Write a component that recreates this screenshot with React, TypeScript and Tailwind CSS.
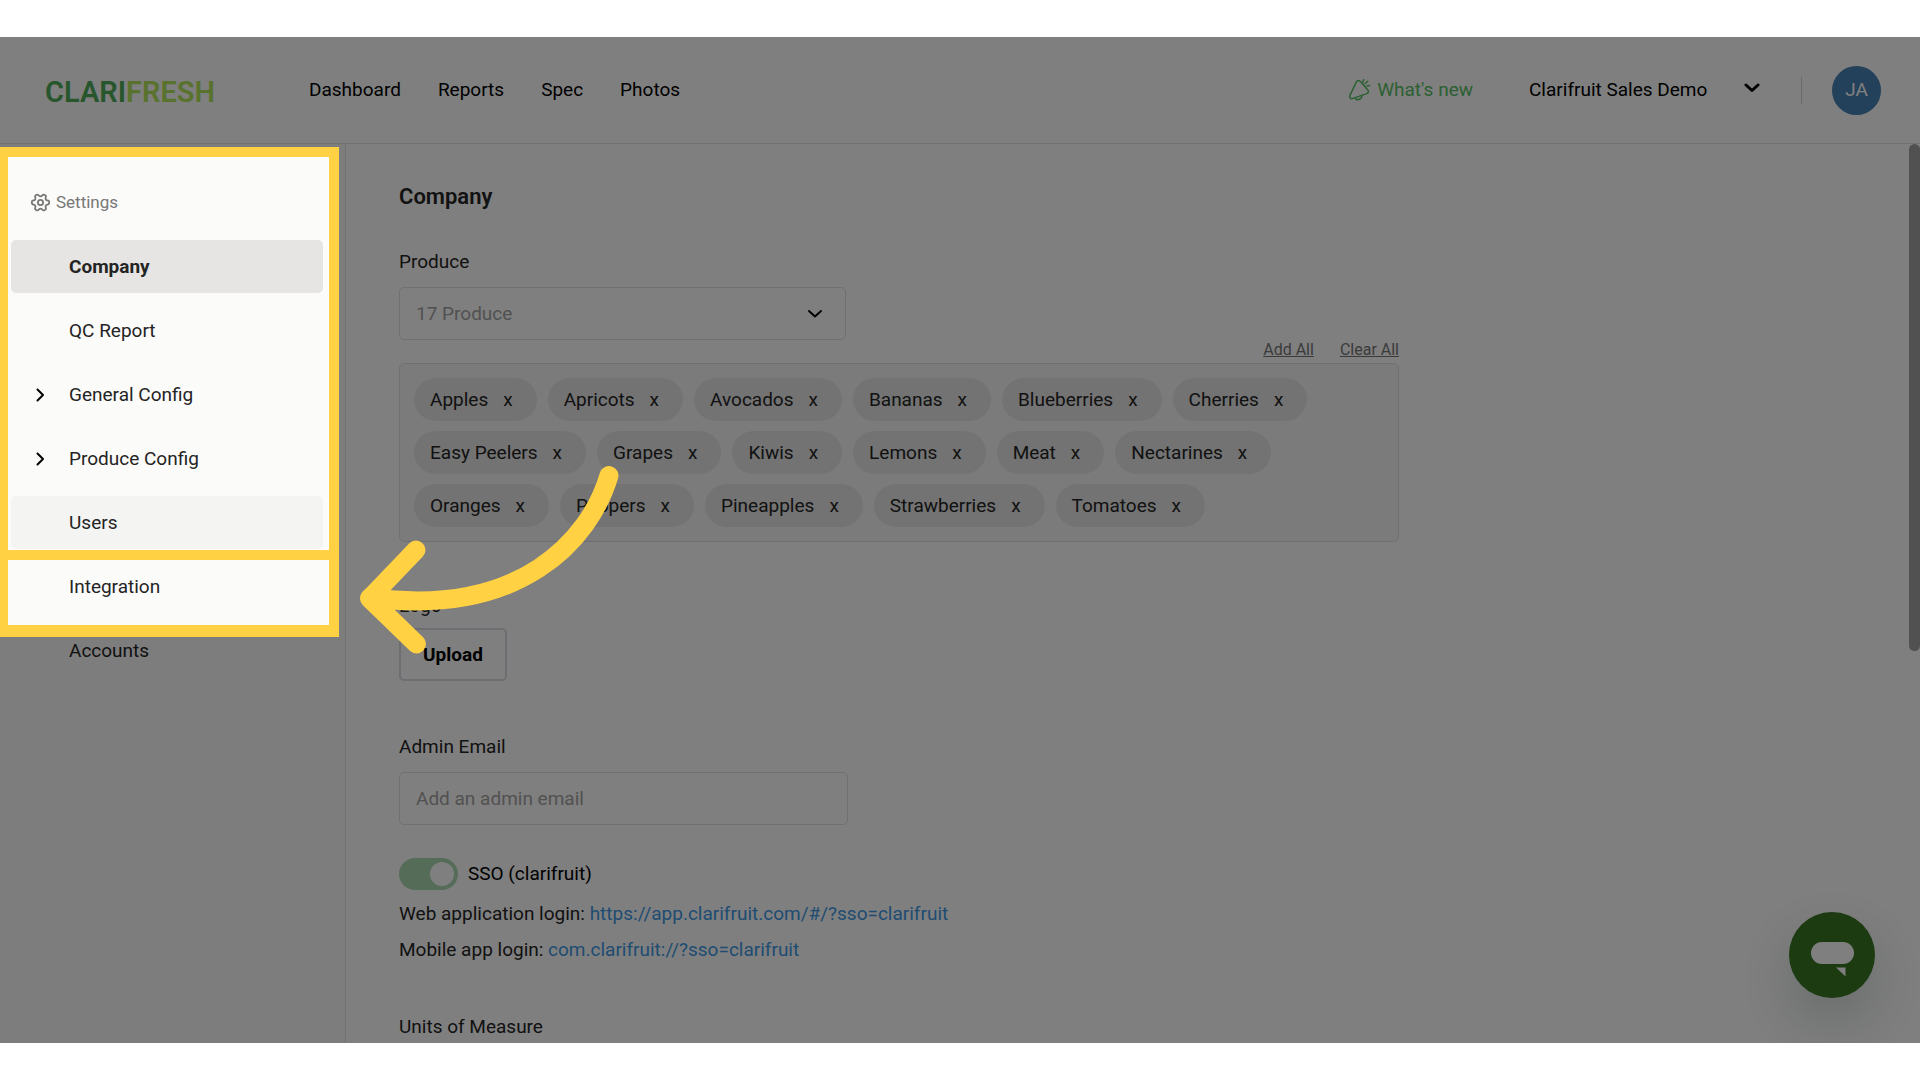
import { useState } from "react"
import { Settings } from "lucide-react"

const navLinks = ["Dashboard", "Reports", "Spec", "Photos"]

const menuItems = [
    { label: "Company", active: true },
    { label: "QC Report" },
    { label: "General Config", expandable: true },
    { label: "Produce Config", expandable: true },
    { label: "Users", hovered: true },
    { label: "Integration" },
    { label: "Accounts" },
]

const allProduce = [
    "Apples", "Apricots", "Avocados", "Bananas", "Blueberries", "Cherries",
    "Easy Peelers", "Grapes", "Kiwis", "Lemons", "Meat", "Nectarines",
    "Oranges", "Peppers", "Pineapples", "Strawberries", "Tomatoes",
]

function MegaphoneIcon() {
    return (
        <svg viewBox="0 0 22 22" className="h-[22px] w-[22px]" fill="none" stroke="currentColor" strokeWidth="1.5" strokeLinecap="round" strokeLinejoin="round" aria-hidden="true">
            <path d="M7.600 2.600.9 16.400C.2 18.600 1.400 20 3.400 19.600L17.600 14.600c2-.8 2.300-2.200 1.200-3.600L11.400 2.400C10.300 1.200 8.400 1.200 7.600 2.600Z" />
            <path d="M6 18.900c.9 2.700 6.800 2.300 6.900-2.500" />
            <path d="m13.800 3.200.8-2.400M16 4.800l2.800-2.600M17.800 7l2.800-.4" />
        </svg>
    )
}

function ChevronDown({ thick }: { thick?: boolean }) {
    return (
        <svg viewBox="0 0 16 10" className="pointer-events-none h-[10px] w-[16px]" fill="none" stroke="currentColor" strokeWidth={thick ? 3 : 2} strokeLinecap="round" strokeLinejoin="round" aria-hidden="true">
            <path d="m2 2 6 5.500L14 2" />
        </svg>
    )
}

function ChevronRight() {
    return (
        <svg viewBox="0 0 9 14" className="h-[14px] w-[9px]" fill="none" stroke="black" strokeWidth="2" strokeLinecap="round" strokeLinejoin="round" aria-hidden="true">
            <path d="m1.500 1.500 5.500 5.500-5.500 5.500" />
        </svg>
    )
}

function Header() {
    return (
        <header className="flex h-[107px] shrink-0 items-center border-b border-[#e2e2e6] bg-white pl-[45px] pr-[39px] text-black">
            <a href="#" className="w-[264px] pt-1 text-[29px] font-semibold leading-[30px] text-[#4eac5a]">
                CLARI<span className="text-[#b2e45a]">FRESH</span>
            </a>
            <nav className="flex gap-[37px]">
                {navLinks.map((link) => (
                    <a key={link} href="#">{link}</a>
                ))}
            </nav>
            <div className="ml-auto flex items-center">
                <a href="#" className="mr-14 flex items-center gap-[6px] text-[#58c065]">
                    <MegaphoneIcon />
                    What's new
                </a>
                <div className="flex items-center">
                    <select aria-label="Account" className="w-[231px] appearance-none bg-transparent">
                        <option>Clarifruit Sales Demo</option>
                    </select>
                    <span className="-ml-4 pb-1"><ChevronDown thick /></span>
                </div>
                <div className="ml-[41px] h-[27px] w-px bg-[#d6d6d6]" />
                <button className="ml-[30px] h-[49px] w-[49px] rounded-full bg-[#4682b4] text-white">JA</button>
            </div>
        </header>
    )
}

function Sidebar() {
    return (
        <aside className="w-[346px] shrink-0 border-r border-[#e4e4e6] bg-[#fbfbfa] pl-[11px] pr-[22px] pt-[46px] text-[#242424]">
            <h2 className="flex h-6 items-center gap-[5px] pl-[19px] text-[17px] text-[#777]">
                <Settings size={21} strokeWidth={2} className="rotate-90" />
                Settings
            </h2>
            <ul className="mt-[26px] flex flex-col gap-[11px]">
                {menuItems.map((item) => (
                    <li key={item.label}>
                        <button
                            className={`flex h-[53px] w-full items-center rounded-[5px] ${item.active ? "bg-[#e6e5e3] font-bold" : ""} ${item.hovered ? "bg-[#f4f4f3]" : ""}`}
                        >
                            <span className="w-[58px] pl-[25px]">{item.expandable && <ChevronRight />}</span>
                            {item.label}
                        </button>
                    </li>
                ))}
            </ul>
        </aside>
    )
}

function CompanyForm() {
    const [produce, setProduce] = useState(allProduce)
    const [sso, setSso] = useState(true)

    return (
        <main className="relative flex-1 overflow-hidden bg-white pl-[53px] pt-[41px] text-[#242424]">
            <h1 className="text-[22px] font-semibold">Company</h1>

            <label htmlFor="produce" className="mt-[41px] block">Produce</label>
            <div className="mt-[13px] flex items-center text-black">
                <select id="produce" className="h-[53px] w-[447px] appearance-none rounded-[5px] border border-[#e0e0e8] px-4 text-[#a3a3a3]">
                    <option>{produce.length} Produce</option>
                </select>
                <span className="-ml-[39px]"><ChevronDown /></span>
            </div>

            <div className="w-full max-w-[1000px]">
                <div className="flex h-[23px] items-start justify-end gap-[26px] text-base leading-[20px] text-[#777]">
                    <button className="underline" onClick={() => setProduce(allProduce)}>Add All</button>
                    <button className="underline" onClick={() => setProduce([])}>Clear All</button>
                </div>
                <ul className="flex flex-wrap gap-x-[11px] gap-y-[10px] rounded-[5px] border border-[#e0e0e8] bg-[#f7f7f7] p-[14px]">
                    {produce.map((name) => (
                        <li key={name} className="flex h-[43px] items-center rounded-full bg-[#e6e6e6] pl-4 pr-6">
                            {name}
                            <button className="pl-[15px]" aria-label={`Remove ${name}`} onClick={() => setProduce(produce.filter((p) => p !== name))}>x</button>
                        </li>
                    ))}
                </ul>
            </div>

            <p className="mt-[52px]">Logo</p>
            <button className="mt-[10px] block h-[53px] rounded-[5px] border-2 border-[#dcdce4] px-[22px] font-bold text-black">Upload</button>

            <label htmlFor="email" className="mt-[54px] block">Admin Email</label>
            <input id="email" type="email" placeholder="Add an admin email" className="mt-[13px] block h-[53px] w-[449px] rounded-[5px] border border-[#e0e0e8] px-4 placeholder:text-[#a3a3a3]" />

            <label className="mt-[33px] flex h-8 items-center gap-[10px] text-black">
                <input
                    type="checkbox"
                    role="switch"
                    checked={sso}
                    onChange={() => setSso(!sso)}
                    className="flex h-8 w-[59px] appearance-none items-center rounded-full bg-[#ccc] px-1 before:block before:h-6 before:w-6 before:rounded-full before:bg-white checked:justify-end checked:bg-[#a8d8b0]"
                />
                SSO (clarifruit)
            </label>
            <p className="mt-3">Web application login: <a href="#" className="text-[#4098e4]">https://app.clarifruit.com/#/?sso=clarifruit</a></p>
            <p className="mt-3">Mobile app login: <a href="#" className="text-[#4098e4]">com.clarifruit://?sso=clarifruit</a></p>

            <p className="mt-[53px]">Units of Measure</p>

            <div className="absolute right-0 top-0 h-[507px] w-[11px] rounded-full bg-[#a2a2a2]" />
        </main>
    )
}

// Dims everything except the highlighted part of the settings menu
function Spotlight() {
    return (
        <div className="pointer-events-none absolute -left-[2px] top-[110px] flex h-[490px] w-[341px] flex-col border-10 border-b-12 border-[#ffd143] shadow-[0_0_0_2400px_rgba(0,0,0,0.5)]">
            <div className="mt-[393px] h-[10px] bg-[#ffd143]" />
        </div>
    )
}

function Arrow() {
    return (
        <svg viewBox="350 460 280 200" className="pointer-events-none absolute left-[350px] top-[423px] h-[200px] w-[280px]" fill="none" stroke="#ffd143" strokeWidth="19" strokeLinecap="round" strokeLinejoin="round" aria-hidden="true">
            <path d="M609 475.500C590 540 520 618 370 597.500" />
            <path d="M416 550 369.500 598.500 416.500 644" />
        </svg>
    )
}

export default function App() {
    return (
        <div className="flex h-screen flex-col bg-white py-[37px] font-[Roboto,sans-serif] text-[19px] leading-[24px]">
            <div className="relative flex min-h-0 flex-1 flex-col overflow-hidden">
                <Header />
                <div className="flex min-h-0 flex-1">
                    <Sidebar />
                    <CompanyForm />
                </div>

                <button aria-label="Open chat" className="absolute bottom-[45px] right-[45px] h-[86px] w-[86px] rounded-full bg-[#387623] shadow-[0_24px_60px_rgba(0,40,30,0.2)]">
                    <svg viewBox="0 0 86 86" fill="white" aria-hidden="true">
                        <rect x="22" y="30" width="43" height="22" rx="11" />
                        <path d="M47 55.500h9.500v9Z" />
                    </svg>
                </button>

                <Spotlight />
                <Arrow />
            </div>
        </div>
    )
}
